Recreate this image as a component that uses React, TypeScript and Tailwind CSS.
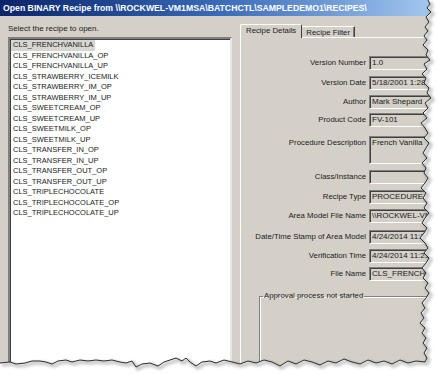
import React from 'react';

const recipes = [
  'CLS_FRENCHVANILLA',
  'CLS_FRENCHVANILLA_OP',
  'CLS_FRENCHVANILLA_UP',
  'CLS_STRAWBERRY_ICEMILK',
  'CLS_STRAWBERRY_IM_OP',
  'CLS_STRAWBERRY_IM_UP',
  'CLS_SWEETCREAM_OP',
  'CLS_SWEETCREAM_UP',
  'CLS_SWEETMILK_OP',
  'CLS_SWEETMILK_UP',
  'CLS_TRANSFER_IN_OP',
  'CLS_TRANSFER_IN_UP',
  'CLS_TRANSFER_OUT_OP',
  'CLS_TRANSFER_OUT_UP',
  'CLS_TRIPLECHOCOLATE',
  'CLS_TRIPLECHOCOLATE_OP',
  'CLS_TRIPLECHOCOLATE_UP',
];

// label, value, top margin, box height
const fields: { label: string; value: string; mt: string; tall?: boolean }[] = [
  { label: 'Version Number', value: '1.0', mt: 'mt-[18px]' },
  { label: 'Version Date', value: '5/18/2001 1:28:00 PM', mt: 'mt-[6px]' },
  { label: 'Author', value: 'Mark Shepard', mt: 'mt-[5px]' },
  { label: 'Product Code', value: 'FV-101', mt: 'mt-[4px]' },
  { label: 'Procedure Description', value: 'French Vanilla', mt: 'mt-[9px]', tall: true },
  { label: 'Class/Instance', value: '', mt: 'mt-[6px]' },
  { label: 'Recipe Type', value: 'PROCEDURE', mt: 'mt-[6px]' },
  { label: 'Area Model File Name', value: '\\\\ROCKWEL-VM1MSA\\BATCHCTL', mt: 'mt-[5px]' },
  { label: 'Date/Time Stamp of Area Model', value: '4/24/2014 11:20:16 AM', mt: 'mt-[7px]' },
  { label: 'Verification Time', value: '4/24/2014 11:21:40 AM', mt: 'mt-[5px]' },
  { label: 'File Name', value: 'CLS_FRENCHVANILLA.bpc', mt: 'mt-[4px]' },
];

// torn paper edge, right side (y, x) and bottom (x, y)
const rightEdge = [
  [0, 428], [4, 430], [8, 427], [12, 431], [17, 426], [22, 429], [27, 425], [31, 428], [36, 424], [40, 427],
  [45, 423], [50, 428], [55, 426], [60, 430], [64, 424], [69, 427], [74, 422], [78, 426], [83, 424], [88, 429],
  [93, 427], [98, 431], [103, 425], [108, 428], [113, 423], [118, 427], [123, 421], [128, 425], [133, 428],
  [138, 424], [143, 429], [148, 426], [153, 423], [158, 427], [163, 422], [168, 426], [173, 424], [178, 428],
  [183, 425], [188, 421], [193, 426], [198, 423], [203, 427], [208, 424], [213, 429], [218, 425], [223, 422],
  [228, 427], [233, 424], [238, 420], [243, 425], [248, 428], [253, 424], [258, 429], [263, 426], [268, 422],
  [273, 426], [278, 423], [283, 428], [288, 425], [293, 429], [298, 426], [303, 422], [308, 425], [313, 421],
  [318, 424], [323, 420], [328, 425], [333, 422], [338, 426], [343, 423], [348, 427], [353, 424], [358, 427],
  [362, 425],
];
const bottomEdge = [
  [0, 363], [10, 362], [16, 364], [25, 363], [32, 361], [40, 361], [46, 362], [52, 364], [58, 361], [66, 360],
  [72, 362], [80, 360], [88, 361], [96, 360], [104, 361], [112, 360], [120, 362], [126, 363], [132, 361],
  [136, 367], [142, 364], [150, 363], [158, 366], [164, 362], [170, 360], [176, 358], [182, 361], [186, 358],
  [190, 362], [196, 366], [202, 362], [210, 361], [216, 363], [224, 360], [232, 362], [240, 364], [248, 361],
  [256, 363], [264, 360], [272, 362], [280, 366], [288, 361], [296, 364], [304, 360], [312, 362], [320, 365],
  [328, 361], [336, 363], [344, 359], [352, 362], [360, 364], [368, 360], [376, 363], [384, 361], [392, 364],
  [400, 360], [408, 363], [416, 361], [425, 362],
];

const edgeLine =
  rightEdge.map(([y, x]) => `${x},${y}`).join(' ') +
  ' ' +
  [...bottomEdge].reverse().map(([x, y]) => `${x},${y}`).join(' ');
const outside = `M437,0 L${edgeLine.split(' ').join(' L')} L0,374 L437,374 Z`;

function TornEdge() {
  return (
    <svg className="absolute inset-0 pointer-events-none" width="437" height="374" viewBox="0 0 437 374">
      <defs>
        <filter id="blur" x="-10%" y="-10%" width="120%" height="120%">
          <feGaussianBlur stdDeviation="1.5" />
        </filter>
      </defs>
      <path d={outside} fill="#fff" />
      <polyline
        points={edgeLine}
        transform="translate(2 2)"
        fill="none"
        stroke="#8a8a8a"
        strokeWidth="3"
        opacity="0.55"
        filter="url(#blur)"
      />
      <polyline points={edgeLine} fill="none" stroke="#2b2b2b" strokeWidth="1" />
    </svg>
  );
}

export default function App() {
  return (
    <div className="relative w-[437px] h-[374px] overflow-hidden bg-white font-['Liberation_Sans',Arial,sans-serif] text-[#1a1a1a]">
      <div className="flex flex-col w-[437px] h-[374px] bg-[#d4d0c8]">
        {/* caption */}
        <div className="h-4 shrink-0 bg-gradient-to-r from-[#0a246a] via-[#3a6ab8] to-[#a6caf0] pl-[3px] text-[8.7px] leading-4 font-bold text-white whitespace-nowrap">
          Open BINARY Recipe from \\ROCKWEL-VM1MSA\BATCHCTL\SAMPLEDEMO1\RECIPES\
        </div>

        <div className="flex flex-1 min-h-0">
          {/* recipe list */}
          <div className="flex flex-col w-[232px] shrink-0 pl-2 pt-2">
            <div className="h-[10px] text-[8px] leading-[10px] whitespace-nowrap">Select the recipe to open.</div>
            <div className="mt-[3px] flex-1 bg-white border-2 border-t-[#808080] border-l-[#808080] border-r-[#e8e6e2] border-b-[#e8e6e2] shadow-[inset_1px_1px_0_#404040] pl-px pt-px">
              {recipes.map((r, i) => (
                <div key={r} className="h-[10.5px] text-[7.5px] leading-[10.5px] whitespace-nowrap">
                  <span className={i === 0 ? 'inline-block px-[2px] bg-[#d8d6d0]' : 'inline-block px-[2px]'}>{r}</span>
                </div>
              ))}
            </div>
          </div>

          {/* tabs */}
          <div className="flex flex-col flex-1 pl-2 pt-2 min-w-0">
            <div className="flex items-end h-[13px] text-[7.8px] whitespace-nowrap">
              <div className="relative z-10 -mb-px h-[14px] px-[5px] leading-[12px] bg-[#d4d0c8] border-t border-l border-white border-r border-r-[#404040] rounded-t-[2px]">
                Recipe Details
              </div>
              <div className="h-[11px] px-[4px] leading-[11px] border-t border-r border-t-white border-r-[#404040] shadow-[inset_-1px_0_0_#808080]">
                Recipe Filter
              </div>
            </div>
            <div className="flex flex-col flex-1 border-t border-l border-white">
              {fields.map((f) => (
                <div key={f.label} className={`flex ${f.mt} ${f.tall ? 'items-start' : 'items-center'}`}>
                  <div className="w-[128px] shrink-0 pr-[3px] text-right text-[7.8px] leading-[14px] whitespace-nowrap">
                    {f.label}
                  </div>
                  <div
                    className={`w-[110px] shrink-0 ${f.tall ? 'h-[28px]' : 'h-[14px]'} border border-t-[#808080] border-l-[#808080] border-r-white border-b-white shadow-[inset_1px_1px_0_#404040] pl-[2px] text-[8px] leading-[12px] whitespace-nowrap overflow-hidden`}
                  >
                    {f.value}
                  </div>
                </div>
              ))}
              <fieldset className="mt-[10px] ml-[18px] flex-1 border border-[#808080] shadow-[inset_1px_1px_0_#fff,1px_1px_0_#fff] pl-[3px]">
                <legend className="px-[1px] text-[7.8px] leading-[10px] whitespace-nowrap">Approval process not started</legend>
              </fieldset>
            </div>
          </div>
        </div>
      </div>
      <TornEdge />
    </div>
  );
}
